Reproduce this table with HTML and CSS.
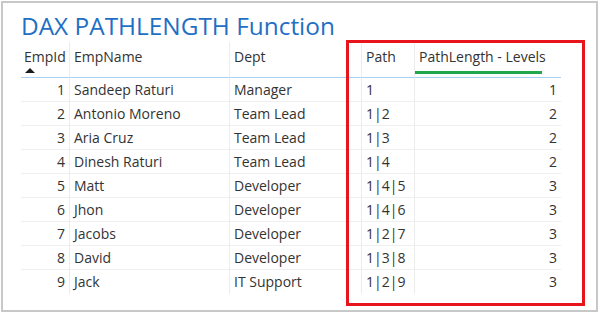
FILE: index.html
```html
<!DOCTYPE html>
<html>
<head>
<meta charset="utf-8">
<link rel="stylesheet" href="styles.css">
</head>
<body>
<div class="frame">
  <h1 class="title">DAX PATHLENGTH Function</h1>
  <div class="table">
    <div class="cell head num-head">EmpId<span class="sort"></span></div>
    <div class="cell head">EmpName</div>
    <div class="cell head">Dept</div>
    <div class="cell head">Path</div>
    <div class="cell head">PathLength - Levels</div>

    <div class="cell num">1</div><div class="cell">Sandeep Raturi</div><div class="cell">Manager</div><div class="cell">1</div><div class="cell num">1</div>
    <div class="cell num">2</div><div class="cell">Antonio Moreno</div><div class="cell">Team Lead</div><div class="cell">1|2</div><div class="cell num">2</div>
    <div class="cell num">3</div><div class="cell">Aria Cruz</div><div class="cell">Team Lead</div><div class="cell">1|3</div><div class="cell num">2</div>
    <div class="cell num">4</div><div class="cell">Dinesh Raturi</div><div class="cell">Team Lead</div><div class="cell">1|4</div><div class="cell num">2</div>
    <div class="cell num">5</div><div class="cell">Matt</div><div class="cell">Developer</div><div class="cell">1|4|5</div><div class="cell num">3</div>
    <div class="cell num">6</div><div class="cell">Jhon</div><div class="cell">Developer</div><div class="cell">1|4|6</div><div class="cell num">3</div>
    <div class="cell num">7</div><div class="cell">Jacobs</div><div class="cell">Developer</div><div class="cell">1|2|7</div><div class="cell num">3</div>
    <div class="cell num">8</div><div class="cell">David</div><div class="cell">Developer</div><div class="cell">1|3|8</div><div class="cell num">3</div>
    <div class="cell num last">9</div><div class="cell last">Jack</div><div class="cell last">IT Support</div><div class="cell last">1|2|9</div><div class="cell num last">3</div>
  </div>
  <div class="highlight-box"></div>
  <div class="green-line"></div>
</div>
</body>
</html>
```

FILE: styles.css
```css
html, body {
  margin: 0;
  padding: 0;
  background: #ffffff;
}
body {
  width: 600px;
  height: 314px;
  overflow: hidden;
  font-family: "Open Sans", "Noto Sans", sans-serif;
}
.frame {
  position: relative;
  box-sizing: border-box;
  margin: 1px 0 0 1px;
  width: 597px;
  height: 311px;
  border: 2px solid #c8c8c8;
  padding: 8px 0 0 18px;
}
.title {
  margin: 0;
  font-family: "Open Sans", sans-serif;
  font-weight: 400;
  font-size: 24.4px;
  line-height: 30px;
  color: #1f6fc5;
  height: 31px;
}
.table {
  display: grid;
  grid-template-columns: 49px 160px 132px 53px 146px;
  grid-template-rows: 36px repeat(9, 24px);
  width: 540px;
  font-size: 14px;
  color: #333333;
}
.cell {
  box-sizing: border-box;
  border-right: 1px solid #ececec;
  border-bottom: 1px solid #efefef;
  padding: 0 4px;
  line-height: 23px;
  white-space: nowrap;
}
.cell:nth-child(5n) {
  border-right: none;
}
.cell.last {
  border-bottom: none;
}
.head {
  border-bottom: 1px solid #a8d0f3;
  padding-top: 3px;
  line-height: 24px;
  position: relative;
}
.num-head {
  padding-left: 3px;
}
.sort {
  position: absolute;
  left: 4px;
  top: 26px;
  width: 0;
  height: 0;
  border-left: 5px solid transparent;
  border-right: 5px solid transparent;
  border-bottom: 5px solid #1a1a1a;
}
.num {
  text-align: right;
}
.highlight-box {
  position: absolute;
  left: 343px;
  top: 37px;
  width: 233px;
  height: 260px;
  border: 3px solid #e8141c;
}
.green-line {
  position: absolute;
  left: 412px;
  top: 68px;
  width: 127px;
  height: 3px;
  background: #21a84a;
}
```
